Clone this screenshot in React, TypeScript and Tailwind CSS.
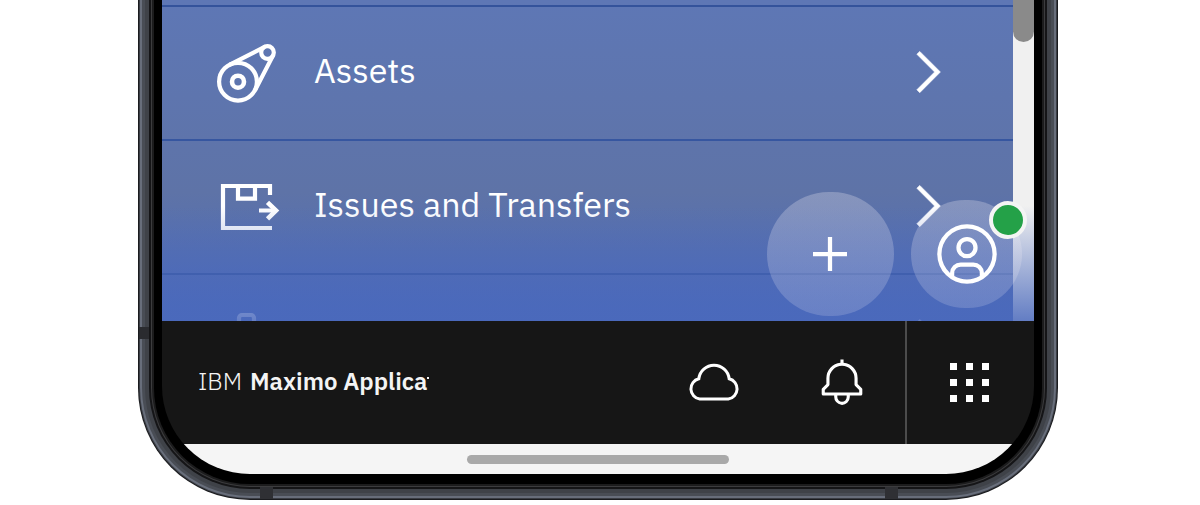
import React from "react";

type IconProps = { className?: string };

function AssetsIcon({ className }: IconProps) {
  return (
    <svg viewBox="216 40 64 64" className={className} fill="none" stroke="currentColor" strokeWidth="4.2" aria-hidden="true">
      <circle cx="238" cy="81.7" r="18.9" />
      <circle cx="238" cy="81.7" r="6" strokeWidth="4.6" />
      <circle cx="267.5" cy="52.5" r="6.3" />
      <path d="M229.4 64.8 264.7 46.9M254.9 90.5 273.1 55.4" />
    </svg>
  );
}

function TransferIcon({ className }: IconProps) {
  return (
    <svg viewBox="216 174 64 64" className={className} fill="none" stroke="currentColor" strokeWidth="4.2" aria-hidden="true">
      <path d="M272 228H223V186H270V195M238 186V198.7H255V186M259 210.5H276" />
      <path d="M267.5 202.3 276 210.5 267.5 218.8" strokeWidth="4.6" />
    </svg>
  );
}

function DeviceIcon({ className }: IconProps) {
  return (
    <svg viewBox="0 0 64 64" className={className} fill="none" stroke="currentColor" strokeWidth="4.2" aria-hidden="true">
      <rect x="23" y="7" width="15" height="50" rx="3" />
    </svg>
  );
}

function ChevronIcon({ className }: IconProps) {
  return (
    <svg viewBox="0 0 32 32" className={className} fill="currentColor" stroke="currentColor" strokeWidth="0.3" aria-hidden="true">
      <path d="M22 16 12 26 10.6 24.6 19.2 16 10.6 7.4 12 6z" />
    </svg>
  );
}

function PlusIcon({ className }: IconProps) {
  return (
    <svg viewBox="0 0 32 32" className={className} fill="currentColor" aria-hidden="true">
      <path d="M17 15V8H15V15H8V17H15V24H17V17H24V15z" />
    </svg>
  );
}

function AvatarIcon({ className }: IconProps) {
  return (
    <svg viewBox="0 0 32 32" className={className} fill="currentColor" aria-hidden="true">
      <path d="M16,8a5,5,0,1,0,5,5A5,5,0,0,0,16,8Zm0,8a3,3,0,1,1,3-3A3.0034,3.0034,0,0,1,16,16Z" />
      <path d="M16,2A14,14,0,1,0,30,16,14.0158,14.0158,0,0,0,16,2ZM10,26.3765V25a3.0033,3.0033,0,0,1,3-3h6a3.0033,3.0033,0,0,1,3,3v1.3765a11.8989,11.8989,0,0,1-12,0Zm13.9925-1.4507A5.0016,5.0016,0,0,0,19,20H13a5.0016,5.0016,0,0,0-4.9925,4.9258,12,12,0,1,1,15.985,0Z" />
    </svg>
  );
}

function CloudIcon({ className }: IconProps) {
  return (
    <svg viewBox="688 358 52 52" className={className} fill="none" stroke="currentColor" strokeWidth="3" aria-hidden="true">
      <path d="M699.7 400A10.3 10.3 0 0 1 698.8 379.8A15.3 15.3 0 0 1 729.2 379.8A10.3 10.3 0 0 1 728.3 400Z" />
    </svg>
  );
}

function BellIcon({ className }: IconProps) {
  return (
    <svg viewBox="0 0 32 32" className={className} fill="currentColor" aria-hidden="true">
      <path d="M28.7071,19.293,26,16.5859V13a10.0136,10.0136,0,0,0-9-9.9492V1H15V3.0508A10.0136,10.0136,0,0,0,6,13v3.5859L3.2929,19.293A1,1,0,0,0,3,20v3a1,1,0,0,0,1,1h7v.7768a5.152,5.152,0,0,0,4.5,5.1987A5.0057,5.0057,0,0,0,21,25V24h7a1,1,0,0,0,1-1V20A1,1,0,0,0,28.7071,19.293ZM19,25a3,3,0,0,1-6,0V24h6Zm8-3H5V20.4141L7.707,17.707A1,1,0,0,0,8,17V13a8,8,0,0,1,16,0v4a1,1,0,0,0,.293.707L27,20.4141Z" />
    </svg>
  );
}

function SwitcherIcon({ className }: IconProps) {
  return (
    <svg viewBox="0 0 39 39" className={className} fill="currentColor" aria-hidden="true">
      {[0, 16, 32].map((y) => [0, 16, 32].map((x) => <rect key={`${x}-${y}`} x={x} y={y} width="7" height="7" />))}
    </svg>
  );
}

function MenuRow({ icon, label }: { icon: React.ReactNode; label: string }) {
  return (
    <a href="#" className="flex h-[134px] shrink-0 items-center border-b-2 border-[#3656a0] pr-[52px] pb-0.5 pl-[54px] text-white">
      {icon}
      <span className="ml-[34px] flex-1 pb-1 text-[34px] leading-10">{label}</span>
      <ChevronIcon className="size-[66px] shrink-0" />
    </a>
  );
}

export default function App() {
  return (
    <div className="overflow-hidden bg-white pr-[142px] pb-8 pl-[138px] font-['IBM_Plex_Sans','Noto_Sans',sans-serif]">
      <div className="relative px-6">
        <main className="overflow-hidden rounded-b-[88px] bg-black shadow-[0_2px_0_8px_#000,0_2px_0_10px_#1c1c1d,0_2px_0_11px_#3c3c3e,0_2px_0_13px_#151517,0_2px_0_17px_#3f4248,0_2px_0_20px_#494d55,0_2px_0_22px_#686e7b,0_2px_0_23px_#3a3d44,0_2px_0_24px_#1a1b1e]">
          <section className="relative flex h-[321px] overflow-hidden">
            <nav className="flex flex-1 flex-col bg-linear-to-b from-[#5e77b5] via-[#5e73a7] via-60% to-[#4b69ba]">
              <div className="h-[7px] shrink-0 border-b-2 border-[#34539b]" />
              <MenuRow icon={<AssetsIcon className="size-16" />} label="Assets" />
              <MenuRow icon={<TransferIcon className="size-16" />} label="Issues and Transfers" />
              <MenuRow icon={<DeviceIcon className="size-16" />} label="" />
            </nav>
            <div className="w-[21px] bg-[#f0f0f0]">
              <div className="h-[42px] rounded-b-full bg-[#8a8a8a]" />
            </div>
            <div className="pointer-events-none absolute inset-x-0 bottom-0 h-[115px] bg-linear-to-b from-[#4a69bc]/0 to-[#4a69bc]/85" />
            <div className="absolute right-3 bottom-[5px] flex items-center gap-[17px] text-white">
              <button aria-label="Add" className="flex h-[124px] w-[127px] items-center justify-center rounded-full bg-linear-to-b from-[#f0ecf4]/28 to-[#f0ecf4]/18 pr-px">
                <PlusIcon className="size-[68px]" />
              </button>
              <button aria-label="Account" className="relative flex h-[108px] w-[111px] items-center justify-center rounded-full bg-linear-to-b from-[#f0ecf4]/28 to-[#f0ecf4]/18">
                <AvatarIcon className="size-[68px]" />
                <span className="absolute top-px -right-[5px] size-[38px] rounded-full border-4 border-[#f4f4f4] bg-[#24a148]" />
              </button>
            </div>
          </section>
          <footer className="flex h-[123px] bg-[#161616] text-[#f4f4f4]">
            <div className="flex flex-1 items-center pb-1 pl-9 text-[24px] leading-8 whitespace-nowrap">
              <span className="font-light">IBM</span>
              <strong className="ml-2 font-semibold">Maximo Applica</strong>
              <span className="mb-1.5 size-0.5 bg-[#f4f4f4]" />
            </div>
            <button aria-label="Sync status" className="flex w-32 items-center justify-center pl-0.5 text-white">
              <CloudIcon className="size-[52px]" />
            </button>
            <button aria-label="Notifications" className="flex w-32 items-center justify-center pl-0.5 text-white">
              <BellIcon className="size-[50px]" />
            </button>
            <button aria-label="App switcher" className="flex w-[129px] items-center justify-center border-l-2 border-[#4c4c4c] pr-0.5 text-white">
              <SwitcherIcon className="size-[39px]" />
            </button>
          </footer>
          <div className="flex h-[30px] items-center justify-center bg-[#f5f5f5]">
            <div className="h-[9px] w-[262px] rounded-full bg-[#a9a9a9]" />
          </div>
        </main>
        <span className="absolute bottom-[135px] left-px h-3 w-[10px] bg-[#2a2b2f]" />
        <span className="absolute -bottom-[25px] left-[122px] h-3 w-[13px] bg-[#2f3034]" />
        <span className="absolute right-[160px] -bottom-[25px] h-3 w-[13px] bg-[#2f3034]" />
      </div>
    </div>
  );
}
